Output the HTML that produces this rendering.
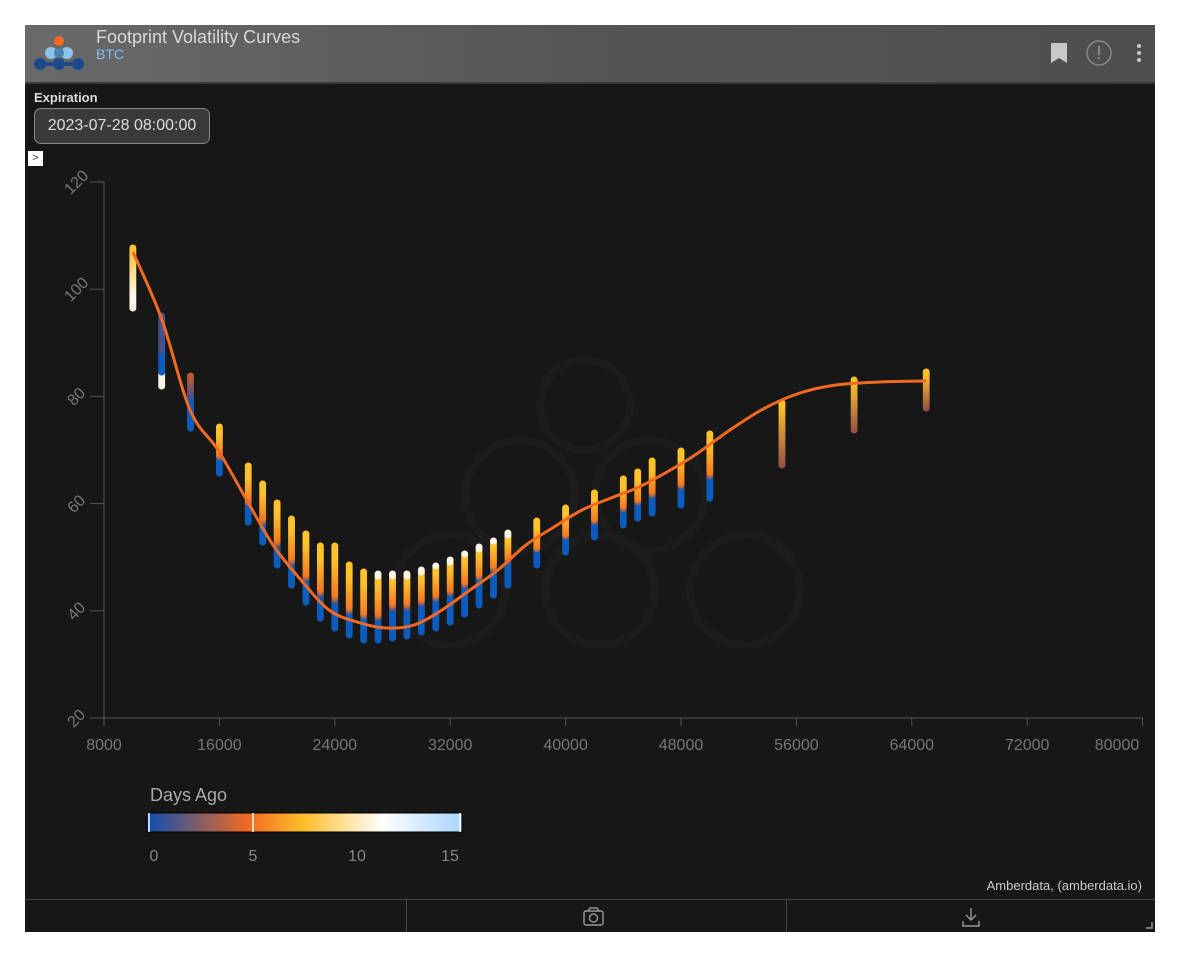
<!DOCTYPE html>
<html><head><meta charset="utf-8"><style>
body{margin:0;background:#fff;width:1180px;height:958px;position:relative;font-family:"Liberation Sans",sans-serif;overflow:hidden}
#f{position:absolute;left:25px;top:25px;width:1130px;height:907px;background:#171717}
#h{position:absolute;left:0;top:0;width:1130px;height:57px;background:linear-gradient(90deg,#6a6a6a,#555 50%,#4e4e4e);border-bottom:2px solid #3a3a3a}
.t{position:absolute;left:71px;top:2px;color:#d8d8d8;font-size:18px}
.b{position:absolute;left:71px;top:21px;color:#7cc0f5;font-size:14px}
.lab{position:absolute;left:9px;top:65px;color:#ddd;font-size:13px;font-weight:bold}
.sel{position:absolute;left:9px;top:83px;width:174px;height:34px;border:1px solid #888;border-radius:7px;background:#3a3a3a;color:#ddd;font-size:16px;line-height:34px;text-align:center}
.arr{position:absolute;left:3px;top:126px;width:15px;height:15px;background:#fff;color:#444;font-size:11px;line-height:15px;text-align:center}
</style></head><body>
<div id="f">
<div id="h">
<svg style="position:absolute;left:8px;top:8px" width="52" height="40"><circle cx="26" cy="8" r="5" fill="#f26a21"/><circle cx="18" cy="20" r="6" fill="#8cc4ea"/><circle cx="34" cy="20" r="6" fill="#8cc4ea"/><circle cx="26" cy="20" r="5" fill="#4a7fb0"/><circle cx="7" cy="31" r="6" fill="#1c4a8a"/><circle cx="26" cy="31" r="6" fill="#1c4a8a"/><circle cx="45" cy="31" r="6" fill="#1c4a8a"/><rect x="7" y="29" width="38" height="4" fill="#1c4a8a"/></svg>
<div class="t">Footprint Volatility Curves</div><div class="b">BTC</div>
<svg style="position:absolute;left:1024px;top:17px" width="20" height="22"><path d="M2 1h16v20l-8-5-8 5z" fill="#c8c8c8"/></svg>
<svg style="position:absolute;left:1060px;top:14px" width="28" height="28"><circle cx="14" cy="14" r="12" fill="none" stroke="#888" stroke-width="1.5"/><rect x="13" y="7" width="2" height="9" fill="#888"/><rect x="13" y="18" width="2" height="2" fill="#888"/></svg>
<svg style="position:absolute;left:1110px;top:18px" width="8" height="20"><circle cx="4" cy="3" r="2" fill="#ccc"/><circle cx="4" cy="10" r="2" fill="#ccc"/><circle cx="4" cy="17" r="2" fill="#ccc"/></svg>
</div>
<div class="lab">Expiration</div>
<div class="sel">2023-07-28 08:00:00</div>
<div class="arr">&gt;</div>
</div>
<svg id="p" style="position:absolute;left:0;top:0" width="1180" height="958" font-family="Liberation Sans,sans-serif">
<g fill="none" stroke="#1c1c1c" stroke-width="8">
<circle cx="585" cy="405" r="45"/><circle cx="520" cy="495" r="55"/><circle cx="650" cy="495" r="55"/><circle cx="450" cy="590" r="55"/><circle cx="600" cy="590" r="55"/><circle cx="745" cy="590" r="55"/></g>
<g stroke="#555" stroke-width="1"><line x1="104" y1="182" x2="104" y2="718"/><line x1="90" y1="718" x2="1143" y2="718"/></g>
<g id="ax" fill="#777" font-size="16"></g>
<g id="dots"></g>
<path id="cv" fill="none" stroke="#f26a21" stroke-width="3"/>
<defs><linearGradient id="cb"><stop offset="0" stop-color="#0d4fb0"/><stop offset=".32" stop-color="#f26a21"/><stop offset=".5" stop-color="#fdbf2d"/><stop offset=".75" stop-color="#fff"/><stop offset="1" stop-color="#a8d4ff"/></linearGradient></defs>
<text x="150" y="801" fill="#aaa" font-size="18">Days Ago</text>
<rect x="147" y="813" width="315" height="19" fill="url(#cb)" stroke="#000"/>
<g stroke="#fff" stroke-width="1.5"><line x1="149" y1="813" x2="149" y2="832"/><line x1="253" y1="813" x2="253" y2="832"/><line x1="460" y1="813" x2="460" y2="832"/></g>
<g fill="#888" font-size="16" text-anchor="middle"><text x="154" y="861">0</text><text x="253" y="861">5</text><text x="357" y="861">10</text><text x="450" y="861">15</text></g>
<text x="1142" y="890" fill="#ccc" font-size="13" text-anchor="end">Amberdata, (amberdata.io)</text>
<g stroke="#444"><line x1="25" y1="899.5" x2="1155" y2="899.5"/><line x1="406.5" y1="899" x2="406.5" y2="932"/><line x1="786.5" y1="899" x2="786.5" y2="932"/></g>
<g fill="none" stroke="#999" stroke-width="1.4"><rect x="584" y="911" width="19" height="14" rx="2"/><circle cx="593.5" cy="918" r="4"/><path d="M588 911l2-3h7l2 3"/><path d="M971 908v12M966 915l5 5 5-5M963 921v5h16v-5"/><path d="M1146 928h6v-6"/></g>
</svg>
<script>
var X=v=>104+(v-8000)/8000*115.4, Y=v=>182+(120-v)/20*107.2;
var ax=document.getElementById('ax'),h='';
for(var v=8000;v<=80000;v+=8000){var x=v==80000?1117:X(v);h+='<text x="'+x+'" y="750" text-anchor="middle">'+v+'</text><line x1="'+X(v)+'" y1="718" x2="'+X(v)+'" y2="726" stroke="#555"/>';}
for(var v=20;v<=120;v+=20){var y=Y(v);h+='<text transform="translate(80,'+(y+4)+') rotate(-45)" text-anchor="middle">'+v+'</text><line x1="90" y1="'+y+'" x2="104" y2="'+y+'" stroke="#555"/>';}
ax.innerHTML=h;
var cols=[[10000,247,308],[12000,316,386],[14000,375,428],[16000,426,473],[18000,466,522],[19000,483,542],[20000,503,565],[21000,518,585],[22000,533,602],[23000,546,618],[24000,545,628],[25000,565,635],[26000,571,640],[27000,573,640],[28000,573,638],[29000,574,636],[30000,570,632],[31000,565,628],[32000,560,622],[33000,553,614],[34000,547,605],[35000,540,595],[36000,533,585],[38000,520,565],[40000,507,552],[42000,492,537],[44000,478,525],[45000,472,518],[46000,460,513],[48000,450,505],[50000,433,498],[55000,403,465],[60000,380,430],[65000,372,408]];
function lerp(a,b,t){return a.map((x,i)=>Math.round(x+(b[i]-x)*t));}
var B=[11,92,190],M=[70,80,140],O=[242,120,33],Yl=[253,195,45],W=[250,245,230];
function col(t,c){
 if(c<=10000){return t<.25?'rgb('+W+')':'rgb('+lerp(W,Yl,(t-.25)/.75)+')';}
 if(c==12000){return t<.2?'rgb('+W+')':(t<.5?'rgb('+B+')':'rgb('+M+')');}
 if(c==14000){return t<.6?'rgb('+B+')':'rgb('+lerp(M,[190,90,50],(t-.6)/.4)+')';}
 if(c>=55000){return 'rgb('+lerp([150,80,70],Yl,t)+')';}
 var bl=(c>=28000&&c<=36000)?.45:.32;
 if(t<bl)return 'rgb('+B+')';
 if(t<bl+.08)return 'rgb('+lerp(M,O,(t-bl)/.08)+')';
 var u=(t-bl-.08)/(1-bl-.08);
 if(c>=27000&&c<=36000&&u>.9)return 'rgb('+W+')';
 return 'rgb('+lerp(O,Yl,Math.min(1,u*1.3))+')';
}
var d='';
cols.forEach(c=>{var x=X(c[0]);for(var y=c[2];y>=c[1];y-=2){var t=(c[2]-y)/(c[2]-c[1]);d+='<rect x="'+(x-3.5)+'" y="'+(y-3.5)+'" width="7" height="7" rx="3.5" fill="'+col(t,c[0])+'"/>';}});
document.getElementById('dots').innerHTML=d;
var pts=[[133,252],[162,320],[190,410],[218,450],[245,497],[273,545],[301,580],[329,610],[357,622],[386,628],[414,625],[442,610],[470,590],[498,570],[526,545],[554,527],[582,510],[611,498],[639,487],[667,472],[695,455],[730,430],[765,408],[800,393],[836,385],[880,382],[926,381]];
var p='M'+pts[0];for(var i=0;i<pts.length-1;i++){var p0=pts[i-1]||pts[i],p1=pts[i],p2=pts[i+1],p3=pts[i+2]||p2;p+=' C'+(p1[0]+(p2[0]-p0[0])/6)+','+(p1[1]+(p2[1]-p0[1])/6)+' '+(p2[0]-(p3[0]-p1[0])/6)+','+(p2[1]-(p3[1]-p1[1])/6)+' '+p2;}
document.getElementById('cv').setAttribute('d',p);
</script>
</body></html>
